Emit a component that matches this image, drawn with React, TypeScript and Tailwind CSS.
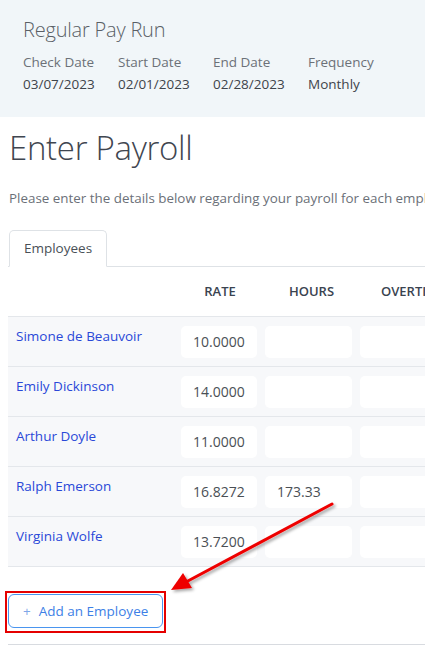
import React from "react";

const rows = [
  { name: "Simone de Beauvoir", rate: "10.0000", hours: "" },
  { name: "Emily Dickinson", rate: "14.0000", hours: "" },
  { name: "Arthur Doyle", rate: "11.0000", hours: "" },
  { name: "Ralph Emerson", rate: "16.8272", hours: "173.33" },
  { name: "Virginia Wolfe", rate: "13.7200", hours: "" },
];

export default function App() {
  return (
    <div
      className="relative w-[425px] h-[646px] overflow-hidden bg-white text-[#4a4f55]"
      style={{ fontFamily: '"Open Sans", "Noto Sans", sans-serif' }}
    >
      <div className="bg-[#f1f6f9] h-[117px] pl-[23px] pt-[16px]">
        <div className="text-[20px] font-light leading-[28px] text-[#5a5f66] tracking-[-0.2px]">Regular Pay Run</div>
        <div className="flex mt-[7px] text-[13.5px] leading-[22px]">
          {[
            ["Check Date", "03/07/2023"],
            ["Start Date", "02/01/2023"],
            ["End Date", "02/28/2023"],
            ["Frequency", "Monthly"],
          ].map(([l, v]) => (
            <div key={l} className="w-[95px]">
              <div className="text-[#6c7178]">{l}</div>
              <div className="text-[#3e444b]">{v}</div>
            </div>
          ))}
        </div>
      </div>

      <div className="pl-[9px] pt-[6px]">
        <div className="text-[33px] font-light leading-[50px] text-[#3f4650] tracking-[-0.3px]">Enter Payroll</div>
        <div className="mt-[15px] text-[13.4px] leading-[20px] text-[#6b7078] whitespace-nowrap">
          Please enter the details below regarding your payroll for each employee.
        </div>
      </div>

      <div className="ml-[8px] mt-[22px] flex border-b border-[#dee2e6] w-[600px]">
        <div className="ml-[1px] w-[98px] h-[37px] -mb-px border border-[#dee2e6] border-b-white bg-white rounded-t-[5px] flex items-center justify-center text-[13.5px] text-[#495057]">
          Employees
        </div>
      </div>

      <div className="ml-[8px] w-[700px]">
        <div className="grid grid-cols-[165px_76px_87px_100px] gap-x-2 h-[50px] items-center border-b border-[#e4e7eb] text-[13px] font-semibold text-[#3a4350]">
          <div></div>
          <div className="text-center pl-[2px]">RATE</div>
          <div className="text-center pl-[6px]">HOURS</div>
          <div className="pl-[21px]">OVERTIME</div>
        </div>
        {rows.map((r) => (
          <div
            key={r.name}
            className="grid grid-cols-[165px_76px_87px_100px] gap-x-2 h-[50px] items-center bg-[#f7f8fa] border-b border-[#e4e7eb]"
          >
            <div className="self-start pt-[9px] pl-[8px] text-[13.5px] text-[#2a48d8]">{r.name}</div>
            <div className="h-[32px] bg-white rounded-[5px] flex items-center pl-[12px] text-[14px] text-[#4a4f55]">{r.rate}</div>
            <div className="h-[32px] bg-white rounded-[5px] flex items-center pl-[12px] text-[14px] text-[#4a4f55]">{r.hours}</div>
            <div className="h-[32px] bg-white rounded-[5px]"></div>
          </div>
        ))}
      </div>

      <div className="ml-[5px] mt-[24px] w-[161px] h-[42px] border-2 border-[#e50000] p-[1px]">
        <div className="h-[34px] border border-[#4a95ef] rounded-[6px] flex items-center pl-[14px] text-[13.5px] text-[#3d7fe6]">
          <span className="mr-[8px] text-[#7fa7e8]">+</span>Add an Employee
        </div>
      </div>

      <div className="absolute left-[8px] right-0 top-[644px] border-t border-[#d8dbe0]"></div>

      <svg className="absolute left-0 top-0" width="425" height="646" viewBox="0 0 425 646">
        <defs>
          <filter id="sh" x="-20%" y="-20%" width="140%" height="140%">
            <feDropShadow dx="2" dy="2" stdDeviation="1.5" floodColor="#000" floodOpacity="0.35" />
          </filter>
        </defs>
        <g filter="url(#sh)">
          <line x1="332" y1="504" x2="186" y2="582" stroke="#ee0000" strokeWidth="3" strokeLinecap="round" />
          <polygon points="171,590 183,573 192,588" fill="#ee0000" />
        </g>
      </svg>
    </div>
  );
}
